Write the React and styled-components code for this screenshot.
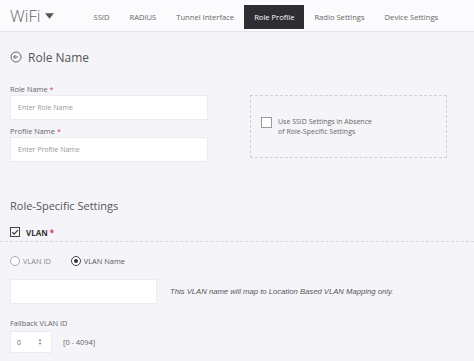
import React from "react";
import styled, { createGlobalStyle } from "styled-components";

const Global = createGlobalStyle`
  html, body { margin: 0; padding: 0; }
  body { background: #f5f5f9; font-family: "Open Sans", "Liberation Sans", sans-serif; color: #444; }
  * { box-sizing: border-box; }
`;

const Page = styled.div`
  width: 474px;
  height: 361px;
  overflow: hidden;
  background: #f5f5f9;
  display: flex;
  flex-direction: column;
`;

const NavBar = styled.div`
  height: 32px;
  background: #fbfbfd;
  border-bottom: 1px solid #e4e4ea;
  display: flex;
  align-items: flex-end;
  padding-left: 10px;
`;

const Brand = styled.div`
  display: flex;
  align-items: center;
  gap: 5px;
  font-size: 16.5px;
  color: #666;
  height: 31px;
  margin-right: 29px;
  font-weight: 300;
`;

const Tabs = styled.div`
  display: flex;
  align-items: flex-end;
  height: 27px;
`;

const Tab = styled.div`
  height: 24px;
  margin-bottom: 2px;
  padding: 0 10px;
  display: flex;
  align-items: center;
  font-size: 7.6px;
  color: ${p => (p.$active ? "#fff" : "#666")};
  background: ${p => (p.$active ? "#2e2d33" : "transparent")};
`;

const Content = styled.div`
  padding: 0 10px;
  display: flex;
  flex-direction: column;
`;

const TitleRow = styled.div`
  display: flex;
  align-items: center;
  gap: 6px;
  height: 20px;
  margin-top: 15px;
  font-size: 12px;
  color: #555;
`;

const TopGrid = styled.div`
  display: grid;
  grid-template-columns: 198px 197px;
  column-gap: 42px;
  align-items: start;
  margin-top: 15px;
`;

const Fields = styled.div`
  display: flex;
  flex-direction: column;
`;

const Label = styled.div`
  font-size: 7.4px;
  color: #666;
  height: 13px;
  display: flex;
  align-items: center;
  margin-top: ${p => p.$mt || 0}px;
`;

const Star = styled.span`
  color: #e0405a;
  margin-left: 2px;
`;

const Input = styled.div`
  width: ${p => p.$w || 198}px;
  height: ${p => p.$h || 25}px;
  background: #fff;
  border: 1px solid #ececf0;
  display: flex;
  align-items: center;
  padding-left: 7px;
  font-size: 7px;
  color: #999;
`;

const DashedBox = styled.div`
  margin-top: 13px;
  height: 63px;
  border: 1px dashed #cfcfd6;
  display: flex;
  align-items: center;
  padding-left: 10px;
`;

const BoxRow = styled.div`
  display: flex;
  align-items: flex-start;
  gap: 6px;
`;

const Box = styled.div`
  width: 11px;
  height: 11px;
  border: 1px solid #999;
  background: #fff;
  flex-shrink: 0;
`;

const SmallText = styled.div`
  font-size: 7px;
  color: #666;
  line-height: 10px;
`;

const Section = styled.div`
  font-size: 11px;
  color: #555;
  margin-top: 34px;
  height: 18px;
  display: flex;
  align-items: center;
`;

const CheckRow = styled.div`
  display: flex;
  align-items: center;
  gap: 6px;
  margin-top: 11px;
  height: 14px;
  font-size: 8px;
  font-weight: 700;
  color: #333;
`;

const Divider = styled.div`
  margin: 2px -10px 0;
  border-top: 1px dashed #d8d8de;
`;

const RadioRow = styled.div`
  display: flex;
  align-items: center;
  gap: 20px;
  margin-top: 12px;
  height: 14px;
`;

const Radio = styled.label`
  display: flex;
  align-items: center;
  gap: 3px;
  font-size: 7.4px;
  color: ${p => (p.$on ? "#555" : "#888")};
`;

const Dot = styled.span`
  width: 10px;
  height: 10px;
  border-radius: 50%;
  border: 1px solid ${p => (p.$on ? "#444" : "#aaa")};
  background: #fff;
  display: flex;
  align-items: center;
  justify-content: center;
  &::after {
    content: "";
    display: ${p => (p.$on ? "block" : "none")};
    width: 4px;
    height: 4px;
    border-radius: 50%;
    background: #333;
  }
`;

const NameRow = styled.div`
  display: flex;
  align-items: center;
  gap: 13px;
  margin-top: 11px;
`;

const Hint = styled.div`
  font-family: "Liberation Sans", Arial, sans-serif;
  font-style: italic;
  font-size: 7.7px;
  color: #555;
`;

const NumRow = styled.div`
  display: flex;
  align-items: center;
  gap: 11px;
  font-size: 7.4px;
  color: #666;
  margin-top: 2px;
`;

const NumInput = styled(Input)`
  justify-content: space-between;
  padding: 0 9px 0 6px;
  color: #666;
`;

const Spinner = styled.span`
  display: flex;
  flex-direction: column;
  font-size: 4px;
  line-height: 4px;
  color: #777;
`;

const BackIcon = () => (
  <svg width="12" height="12" viewBox="0 0 24 24" fill="none" stroke="#555" strokeWidth="1.8">
    <circle cx="12" cy="12" r="10" />
    <path d="M16 12H8M11 8l-4 4 4 4" />
  </svg>
);

const Caret = () => (
  <svg width="9" height="6" viewBox="0 0 10 6"><path d="M0 0h10L5 6z" fill="#555" /></svg>
);

const Check = () => (
  <svg width="10" height="10" viewBox="0 0 10 10" fill="none">
    <rect x="0.5" y="0.5" width="9" height="9" stroke="#444" />
    <path d="M2.2 5.2l1.9 1.9 3.8-4" stroke="#333" strokeWidth="1.1" />
  </svg>
);

export default function App() {
  const tabs = ["SSID", "RADIUS", "Tunnel Interface", "Role Profile", "Radio Settings", "Device Settings"];
  return (
    <Page>
      <Global />
      <NavBar>
        <Brand>WiFi <Caret /></Brand>
        <Tabs>
          {tabs.map(t => (
            <Tab key={t} $active={t === "Role Profile"}>{t}</Tab>
          ))}
        </Tabs>
      </NavBar>
      <Content>
        <TitleRow><BackIcon /> Role Name</TitleRow>
        <TopGrid>
          <Fields>
            <Label>Role Name<Star>*</Star></Label>
            <Input>Enter Role Name</Input>
            <Label $mt={4}>Profile Name<Star>*</Star></Label>
            <Input>Enter Profile Name</Input>
          </Fields>
          <DashedBox>
            <BoxRow>
              <Box />
              <SmallText>
                Use SSID Settings in Absence<br />of Role-Specific Settings
              </SmallText>
            </BoxRow>
          </DashedBox>
        </TopGrid>
        <Section>Role-Specific Settings</Section>
        <CheckRow><Check /><span>VLAN<Star>*</Star></span></CheckRow>
        <Divider />
        <RadioRow>
          <Radio><Dot />VLAN ID</Radio>
          <Radio $on><Dot $on />VLAN Name</Radio>
        </RadioRow>
        <NameRow>
          <Input $w={147} />
          <Hint>This VLAN name will map to Location Based VLAN Mapping only.</Hint>
        </NameRow>
        <Label $mt={12}>Fallback VLAN ID</Label>
        <NumRow>
          <NumInput $w={42} $h={22}>0<Spinner><span>▲</span><span>▼</span></Spinner></NumInput>
          [0 - 4094]
        </NumRow>
      </Content>
    </Page>
  );
}
